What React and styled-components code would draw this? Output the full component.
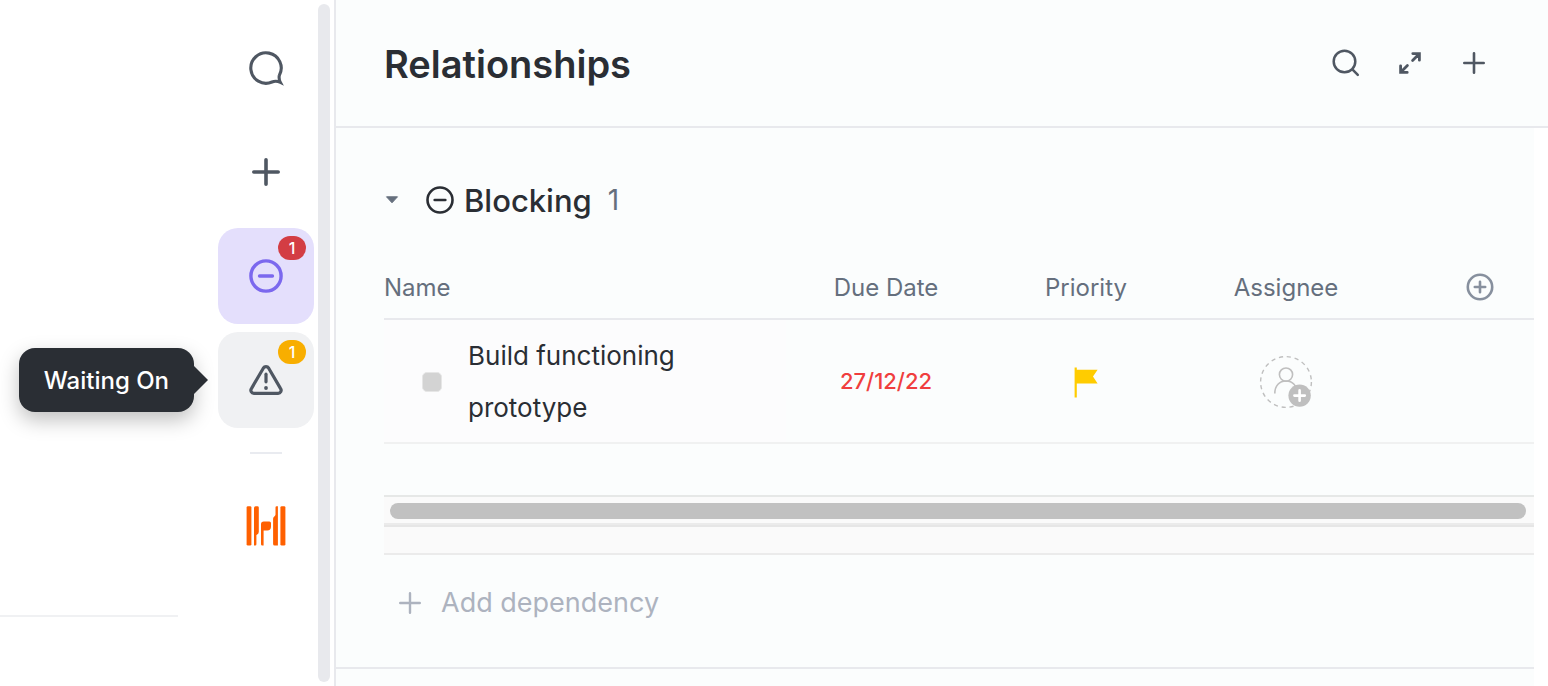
import React from 'react'
import styled, { createGlobalStyle } from 'styled-components'

const columns = ['Due Date', 'Priority', 'Assignee']

const tasks = [{ id: 1, name: 'Build functioning prototype', due: '27/12/22' }]

export default function App() {
  return (
    <>
      <GlobalStyle />
      <Layout>
        <Content />
        <Rail />
        <Track>
          <span />
        </Track>
        <Relationships />
      </Layout>
    </>
  )
}

function Content() {
  return (
    <ContentPane>
      <div className='block' />
    </ContentPane>
  )
}

function Rail() {
  return (
    <RailNav aria-label='Task tools'>
      <RailButton aria-label='Comments'>
        <ChatIcon />
      </RailButton>
      <RailButton aria-label='Add'>
        <PlusIcon size={28} stroke={3.6} />
      </RailButton>
      <RailButton $bg='#e4dffc' $color='#7b68ee' aria-label='Blocking'>
        <MinusCircleIcon size={34} stroke={3.4} />
        <Badge $bg='#d33d44'>1</Badge>
      </RailButton>
      <RailButton $bg='#f0f1f3' aria-describedby='waiting-tip'>
        <WarningIcon />
        <Badge $bg='#f8ae00'>1</Badge>
        <Tooltip role='tooltip' id='waiting-tip'>
          Waiting On
        </Tooltip>
      </RailButton>
      <RailDivider />
      <RailButton aria-label='Integration'>
        <BarsLogo />
      </RailButton>
    </RailNav>
  )
}

function Relationships() {
  return (
    <Panel>
      <PanelHeader>
        <h1>Relationships</h1>
        <div className='actions'>
          <IconButton aria-label='Search'>
            <SearchIcon />
          </IconButton>
          <IconButton aria-label='Expand'>
            <ExpandIcon />
          </IconButton>
          <IconButton aria-label='Add relationship'>
            <PlusIcon size={22} stroke={2.6} />
          </IconButton>
        </div>
      </PanelHeader>
      <PanelBody>
        <Group>
          <GroupHeading>
            <CaretButton aria-label='Collapse'>
              <svg width='14' height='8' viewBox='0 0 14 8'>
                <path
                  d='M1.5 0.8h11l-5.5 6z'
                  fill='currentColor'
                  stroke='currentColor'
                  strokeLinejoin='round'
                />
              </svg>
            </CaretButton>
            <MinusCircleIcon size={28} stroke={2.6} />
            <h2>Blocking</h2>
            <span>1</span>
          </GroupHeading>
          <TaskTable>
            <thead>
              <tr>
                <th className='name'>Name</th>
                {columns.map((column) => (
                  <th key={column} className='field'>
                    {column}
                  </th>
                ))}
                <th className='add'>
                  <IconButton $color='#87909e' aria-label='Add column'>
                    <PlusCircleIcon />
                  </IconButton>
                </th>
              </tr>
            </thead>
            <tbody>
              {tasks.map(({ id, name, due }) => (
                <tr key={id}>
                  <td className='name'>
                    <NameCell>
                      <StatusButton aria-label='Set status' />
                      <a href='#task'>{name}</a>
                    </NameCell>
                  </td>
                  <td className='due'>{due}</td>
                  <td>
                    <IconButton $color='#ffcc00' aria-label='Priority: high'>
                      <FlagIcon />
                    </IconButton>
                  </td>
                  <td>
                    <IconButton $color='#bfbfbf' aria-label='Assign'>
                      <AssigneeIcon />
                    </IconButton>
                  </td>
                  <td />
                </tr>
              ))}
            </tbody>
          </TaskTable>
          <ScrollBar>
            <div className='track'>
              <span />
            </div>
            <div className='corner' />
          </ScrollBar>
          <AddButton>
            <PlusIcon size={22} stroke={2.4} />
            Add dependency
          </AddButton>
        </Group>
      </PanelBody>
    </Panel>
  )
}

function PlusIcon({ size, stroke }) {
  const half = size / 2
  const end = size - stroke / 2
  return (
    <svg width={size} height={size} viewBox={`0 0 ${size} ${size}`}>
      <path
        d={`M${half} ${stroke / 2}V${end}M${stroke / 2} ${half}H${end}`}
        stroke='currentColor'
        strokeWidth={stroke}
        strokeLinecap='round'
      />
    </svg>
  )
}

function MinusCircleIcon({ size, stroke }) {
  return (
    <svg
      width={size}
      height={size}
      viewBox={`0 0 ${size} ${size}`}
      fill='none'
      stroke='currentColor'
      strokeWidth={stroke}
      strokeLinecap='round'
    >
      <circle cx={size / 2} cy={size / 2} r={(size - stroke) / 2 - 0.2} />
      <path d={`M${size * 0.31} ${size / 2}H${size * 0.69}`} />
    </svg>
  )
}

function PlusCircleIcon() {
  return (
    <svg
      width='28'
      height='28'
      viewBox='0 0 28 28'
      fill='none'
      stroke='currentColor'
      strokeWidth='2.6'
      strokeLinecap='round'
    >
      <circle cx='14' cy='14' r='12.2' />
      <path d='M14 8.8v10.4M8.8 14h10.4' />
    </svg>
  )
}

function ChatIcon() {
  return (
    <svg
      width='36'
      height='36'
      viewBox='0 0 36 36'
      fill='none'
      stroke='currentColor'
      strokeWidth='3.1'
    >
      <path d='M31.3 25.4A15.2 15.2 0 1 0 24 32Q28 30.4 32.4 32.4Q30.6 29 31.3 25.4' />
    </svg>
  )
}

function WarningIcon() {
  return (
    <svg
      width='36'
      height='36'
      viewBox='0 0 36 36'
      fill='none'
      stroke='currentColor'
      strokeWidth='3.2'
      strokeLinecap='round'
      strokeLinejoin='round'
    >
      <path d='M15.3 6.2a3.2 3.2 0 0 1 5.4 0L32.6 26.6a3 3 0 0 1-2.6 4.7H6a3 3 0 0 1-2.6-4.7Z' />
      <path d='M18 12.2v7.6' />
      <path d='M18 26v0.1' strokeWidth='3.8' />
    </svg>
  )
}

function SearchIcon() {
  return (
    <svg
      width='32'
      height='32'
      viewBox='0 0 32 32'
      fill='none'
      stroke='currentColor'
      strokeWidth='2.5'
      strokeLinecap='round'
    >
      <circle cx='14.5' cy='14.5' r='10.8' />
      <path d='M22.6 22.6l5.2 5.2' />
    </svg>
  )
}

function ExpandIcon() {
  return (
    <svg
      width='24'
      height='24'
      viewBox='0 0 24 24'
      fill='none'
      stroke='currentColor'
      strokeWidth='2.8'
      strokeLinecap='round'
    >
      <path d='M14.8 2.6h6.6v6.6M21 3l-6.4 6.4M9.2 21.4H2.6v-6.6M3 21l6.4-6.4' />
    </svg>
  )
}

function FlagIcon() {
  return (
    <svg width='24' height='32' viewBox='0 0 24 32' fill='currentColor'>
      <path d='M0.6 1.6h2.2v2.2h20.8l-4.6 6.8 4.6 6.800H2.800v14H0.600z' />
    </svg>
  )
}

function AssigneeIcon() {
  return (
    <svg width='54' height='54' viewBox='0 0 54 54' fill='none' stroke='currentColor'>
      <circle cx='27' cy='27' r='25.4' strokeWidth='1.4' strokeDasharray='4.2 3.78' />
      <circle cx='27' cy='19.6' r='6.6' strokeWidth='1.6' />
      <path d='M15.8 38.6C15.8 30.4 20.6 26 27 26s11.2 4.4 11.2 12.6' strokeWidth='1.6' />
      <circle cx='40.6' cy='40.6' r='11.2' fill='currentColor' stroke='none' />
      <path d='M40.6 35.4v10.4M35.4 40.6h10.4' stroke='#fff' strokeWidth='2.6' strokeLinecap='round' />
    </svg>
  )
}

function BarsLogo() {
  return (
    <svg width='40' height='40' viewBox='0 0 40 40' fill='#ff6000'>
      <rect x='0.6' y='0.2' width='4.8' height='39.4' rx='1.4' />
      <path d='M8 2q0-1.8 1.6-1.8h1.8q1.4 0 1.4 1.4v24.2q0 2-1.6 2.6l-0.8 0.6V38.2q0 1.4-1.2 1.4H8z' />
      <path d='M15 18.2q0-2.8 2.8-2.8h5.6q1.6 0 1.6 1.6v3.6q0 4-3.8 4h-3.6V39.6H16.2q-1.2 0-1.2-1.4z' />
      <path d='M31.9 39.6h-3.2q-1.6 0-1.6-1.6V12.8q0-1.6 1.2-2.4 1.2-0.6 1.2-1.8V1.4q0-1.2 1.2-1.2h1.2z' />
      <rect x='34.4' y='0.2' width='5' height='39.4' rx='1.4' />
    </svg>
  )
}

const GlobalStyle = createGlobalStyle`
  * {
    box-sizing: border-box;
  }
  body {
    margin: 0;
    background: #fff;
    color: #2a2e34;
    font-family: Inter, 'Liberation Sans', sans-serif;
  }
  h1, h2 {
    margin: 0;
  }
  button {
    padding: 0;
    border: none;
    background: none;
    font-family: inherit;
    cursor: pointer;
  }
  svg {
    display: block;
    flex-shrink: 0;
  }
`

const Layout = styled.main`
  display: flex;
  min-height: 100vh;
`

const ContentPane = styled.section`
  display: flex;
  flex: 0 0 178px;
  padding-bottom: 69px;
  .block {
    flex: 1;
    border-bottom: 2px solid #f0f1f3;
  }
`

const RailNav = styled.nav`
  display: flex;
  flex-direction: column;
  align-items: center;
  flex-shrink: 0;
  gap: 8px;
  padding: 20px 4px 20px 40px;
`

const RailButton = styled.button`
  position: relative;
  display: flex;
  align-items: center;
  justify-content: center;
  width: 96px;
  height: 96px;
  border-radius: 20px;
  background: ${({ $bg }) => $bg || 'transparent'};
  color: ${({ $color }) => $color || '#4f5762'};
`

const RailDivider = styled.hr`
  width: 32px;
  margin: 16px 0;
  border: none;
  border-top: 2px solid #e9ebf0;
`

const Badge = styled.span`
  position: absolute;
  top: 8px;
  right: 8px;
  width: 28px;
  border-radius: 12px;
  background: ${({ $bg }) => $bg};
  color: #fff;
  font-size: 16px;
  font-weight: 500;
  line-height: 24px;
`

const Tooltip = styled.span`
  position: absolute;
  top: 16px;
  right: calc(100% + 24px);
  padding: 1px 25px 0;
  border-radius: 16px;
  background: #2a2e34;
  box-shadow: 0 8px 20px rgba(0, 0, 0, 0.25);
  color: #fff;
  font-size: 24px;
  font-weight: 500;
  line-height: 63px;
  white-space: nowrap;
  &::after {
    content: '';
    position: absolute;
    top: 18px;
    left: 100%;
    border: 14px solid transparent;
    border-left-color: #2a2e34;
    border-right: none;
  }
`

const Track = styled.div`
  display: flex;
  flex: 0 0 12px;
  padding: 4px 0;
  margin-right: 4px;
  span {
    flex: 1;
    border-radius: 6px;
    background: #e8e9ed;
  }
`

const Panel = styled.section`
  display: flex;
  flex-direction: column;
  flex: 1;
  min-width: 0;
  border-left: 2px solid #e8e9ed;
`

const PanelHeader = styled.header`
  display: flex;
  align-items: center;
  justify-content: space-between;
  height: 128px;
  padding: 0 42px 0 48px;
  border-bottom: 2px solid #e8e9ed;
  background: #fbfdfd;
  h1 {
    padding-top: 2px;
    font-size: 38px;
    font-weight: 600;
    line-height: 48px;
  }
  .actions {
    display: flex;
  }
  .actions button {
    width: 64px;
    height: 64px;
  }
`

const IconButton = styled.button`
  display: inline-flex;
  align-items: center;
  justify-content: center;
  vertical-align: middle;
  color: ${({ $color }) => $color || '#4f5762'};
`

const PanelBody = styled.div`
  flex: 1;
  margin-right: 14px;
  background: #fbfdfd;
`

const Group = styled.section`
  padding: 48px 0 0 48px;
  border-bottom: 2px solid #e8e9ed;
`

const GroupHeading = styled.div`
  display: flex;
  align-items: center;
  height: 48px;
  margin-bottom: 34px;
  line-height: 48px;
  h2 {
    padding-top: 2px;
    margin: 0 16px 0 10px;
    font-size: 31px;
    font-weight: 500;
  }
  span {
    color: #656f7d;
    font-size: 28px;
  }
`

const CaretButton = styled.button`
  margin-left: 1px;
  margin-right: 27px;
  color: #656f7d;
`

const TaskTable = styled.table`
  width: 100%;
  table-layout: fixed;
  border-spacing: 0;
  th {
    height: 62px;
    padding: 0 0 2px;
    border-bottom: 2px solid #e8e9ed;
    color: #656f7d;
    font-size: 24px;
    font-weight: 400;
  }
  th.name {
    text-align: left;
  }
  th.field {
    width: 200px;
  }
  th.add {
    width: 148px;
    padding: 0 0 4px 40px;
  }
  td {
    padding: 10px 0 8px;
    border-bottom: 2px solid #f0f1f1;
    text-align: center;
  }
  td.name {
    background: #fcfcfd;
  }
  td.due {
    padding: 9px 0;
    color: #f03e3e;
    font-size: 22px;
    font-weight: 500;
  }
`

const NameCell = styled.div`
  display: flex;
  align-items: center;
  gap: 26px;
  padding: 0 60px 0 38px;
  text-align: left;
  a {
    color: #2a2e34;
    font-size: 26px;
    line-height: 52px;
    text-decoration: none;
  }
`

const StatusButton = styled.button`
  flex-shrink: 0;
  width: 20px;
  height: 20px;
  border: 1px solid #e6e6e6;
  border-radius: 5px;
  background: #d3d3d3;
`

const ScrollBar = styled.div`
  margin-top: 51px;
  border-top: 2px solid #e6e8e7;
  background: #fafafa;
  .track {
    padding: 6px 8px 4px 6px;
    border-bottom: 2px solid #ebebeb;
  }
  .track span {
    display: block;
    height: 16px;
    border-radius: 8px;
    background: #c1c1c1;
  }
  .corner {
    height: 30px;
    border-top: 2px solid #e6e6e6;
    border-bottom: 2px solid #ebebeb;
  }
`

const AddButton = styled.button`
  display: flex;
  align-items: center;
  gap: 20px;
  padding: 24px 14px 40px 15px;
  color: #adb3bf;
  font-size: 27px;
  line-height: 48px;
`
